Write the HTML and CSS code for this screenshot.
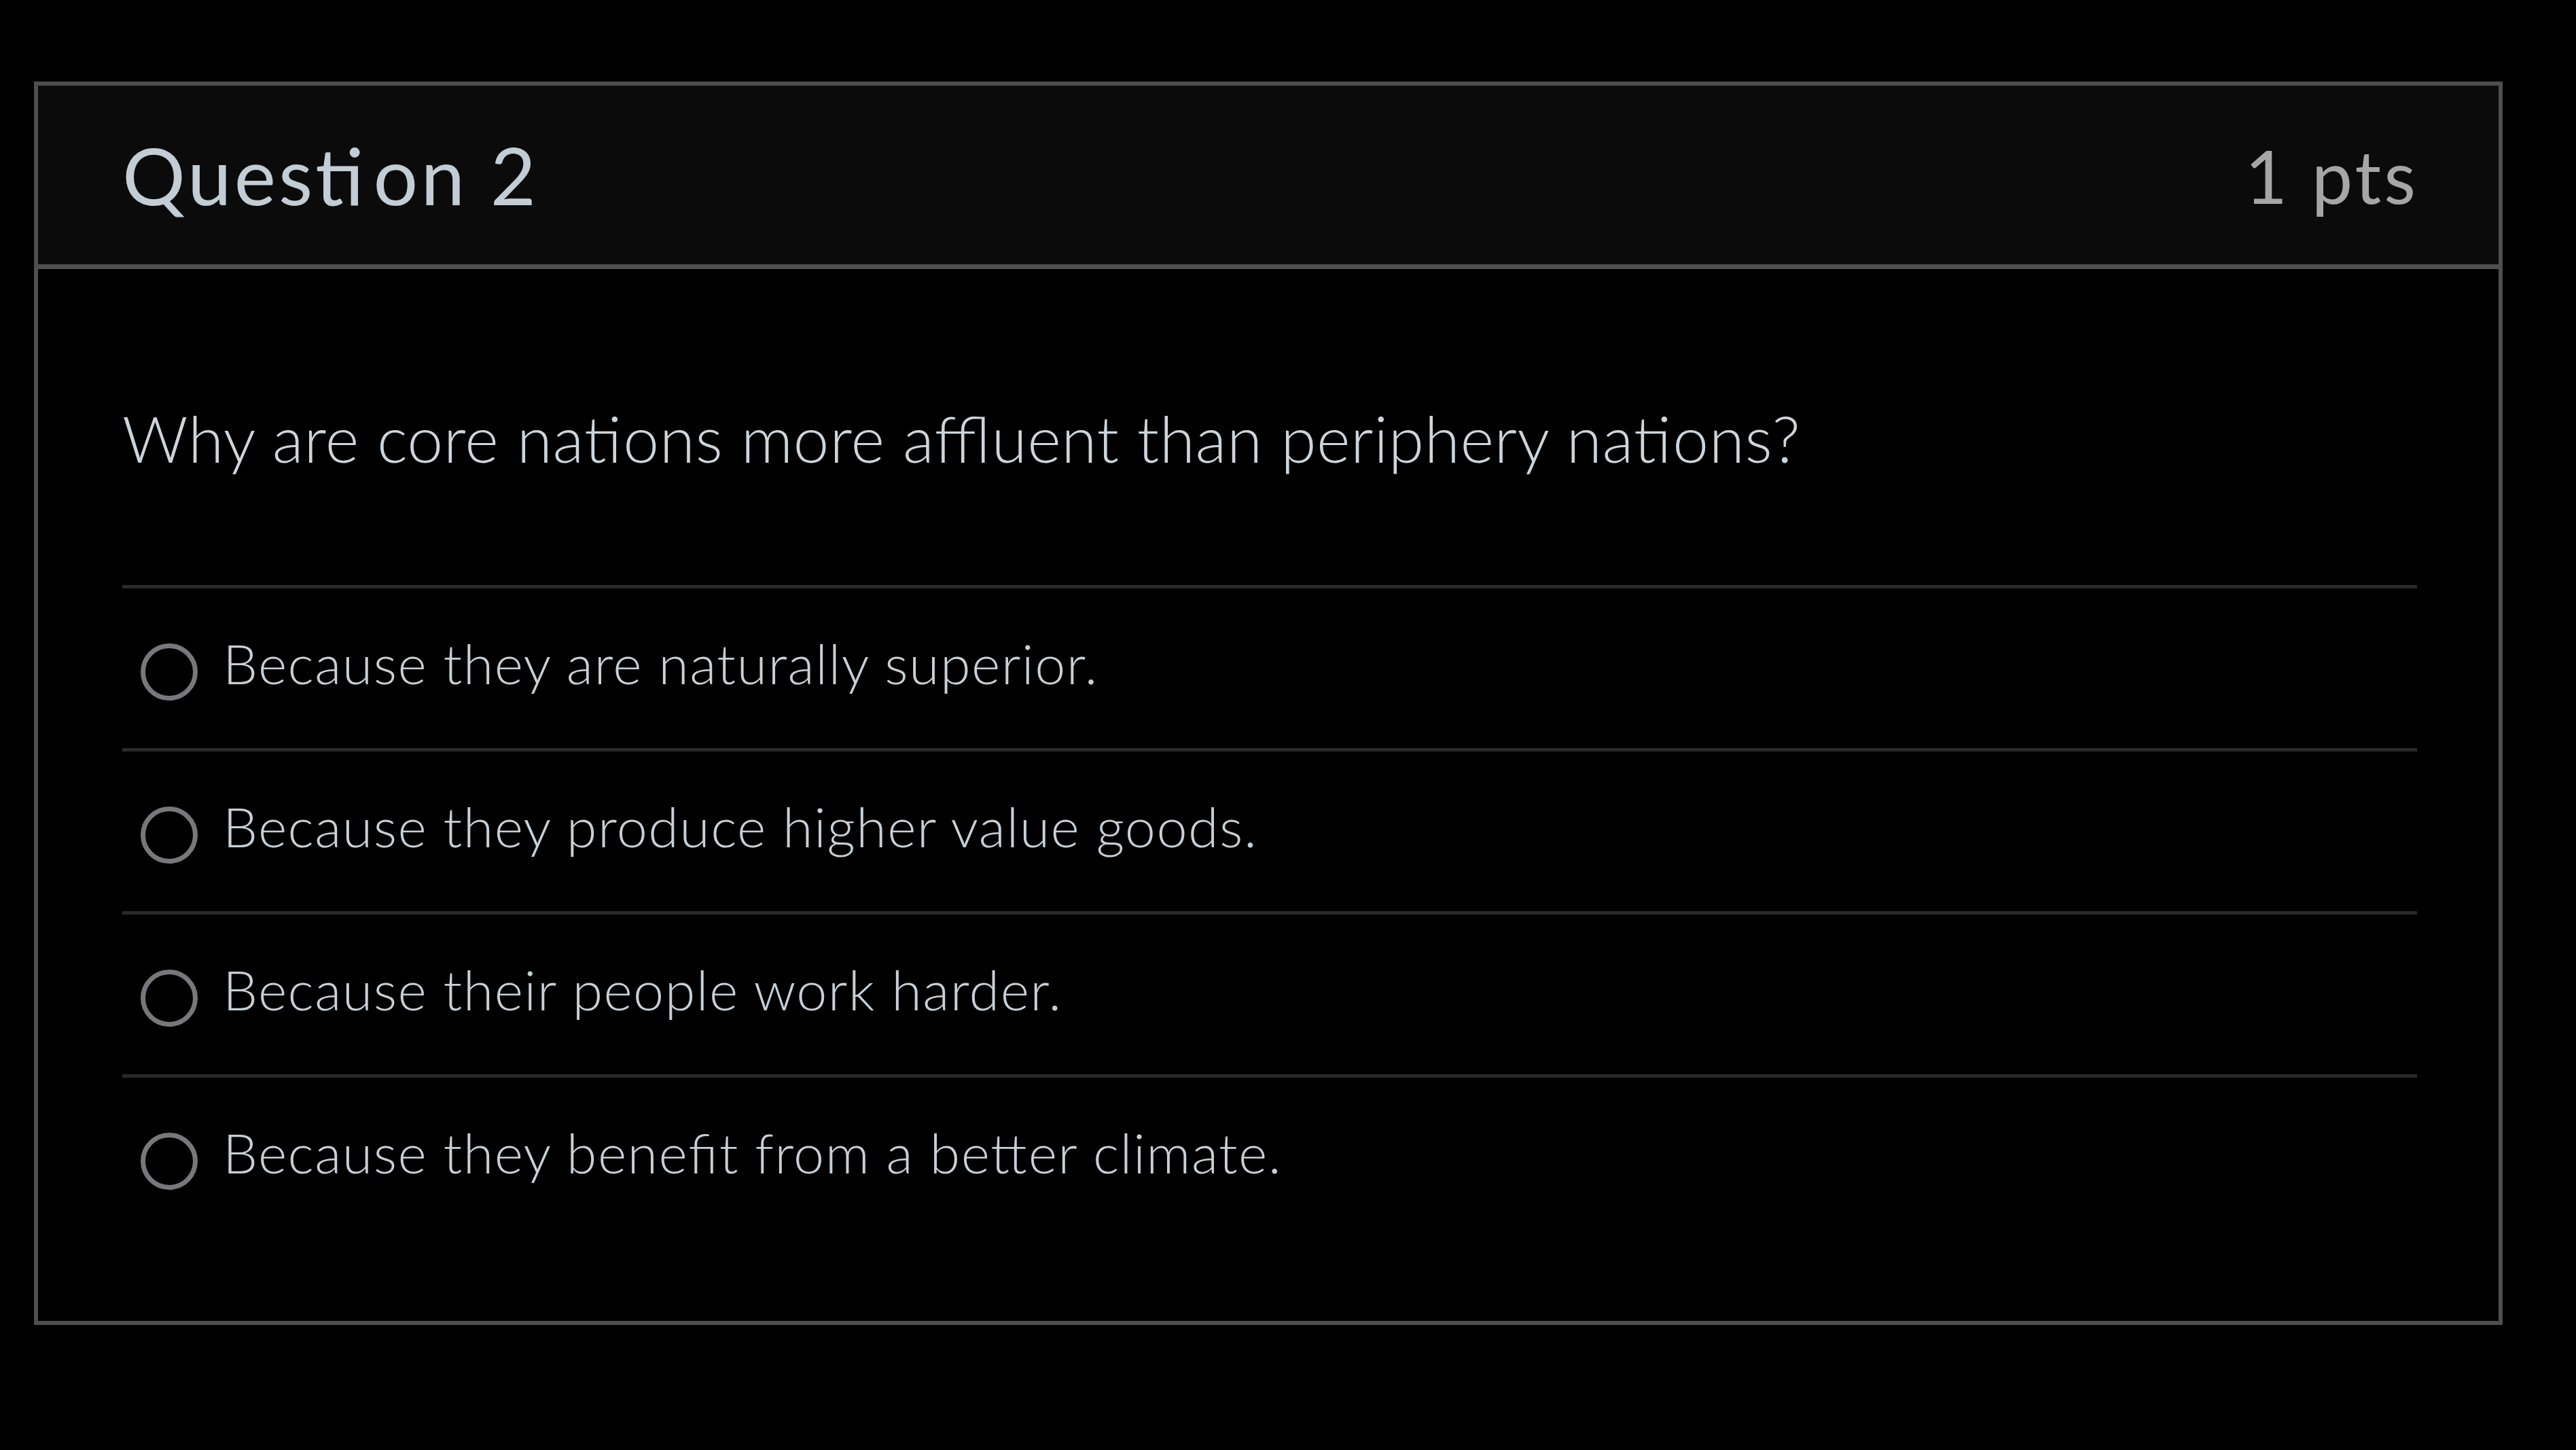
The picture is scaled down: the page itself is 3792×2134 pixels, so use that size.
FILE: index.html
```html
<!DOCTYPE html>
<html lang="en">
<head>
<meta charset="utf-8">
<title>Question 2</title>
<link rel="stylesheet" href="styles.css">
</head>
<body>
<div class="page">
  <section class="card">
    <header class="card-header">
      <h2 class="title">Ques<span class="lig">ti</span>on 2</h2>
      <span class="points">1 pts</span>
    </header>
    <div class="card-body">
      <p class="prompt">Why are core na<span class="lig">ti</span>ons more a<span class="lig">ffl</span>uent than periphery na<span class="lig">ti</span>ons?</p>
      <ul class="answers">
        <li class="answer"><span class="radio"></span><span class="answer-text">Because they are naturally superior.</span></li>
        <li class="answer"><span class="radio"></span><span class="answer-text">Because they produce higher value goods.</span></li>
        <li class="answer"><span class="radio"></span><span class="answer-text">Because their people work harder.</span></li>
        <li class="answer"><span class="radio"></span><span class="answer-text">Because they bene<span class="lig">fi</span>t from a be<span class="lig">tt</span>er climate.</span></li>
      </ul>
    </div>
  </section>
</div>
</body>
</html>
```
FILE: styles.css
```css
html, body {
  margin: 0;
  padding: 0;
  background: #000;
}
body {
  font-family: Lato, "Noto Sans", sans-serif;
  color: #c8d0d6;
  width: 3792px;
  height: 2134px;
  overflow: hidden;
}
.page {
  padding: 120px 108px 0 50px;
}
.card {
  border: 6px solid #4f4f4f;
  box-sizing: border-box;
  height: 1830px;
}
.card-header {
  background: #0b0b0b;
  border-bottom: 7px solid #4f4f4f;
  height: 263px;
  display: flex;
  align-items: center;
  justify-content: space-between;
  padding: 0 118px 0 124px;
}
.title {
  margin: 0;
  font-size: 116px;
  font-weight: 400;
  color: #c2cdd5;
  letter-spacing: 4px;
}
.lig {
  letter-spacing: 0;
  margin-right: 2px;
}
.title .lig {
  margin-right: 14px;
}
.points {
  font-size: 108px;
  color: #a6a6a6;
  letter-spacing: 4px;
}
.card-body {
  padding: 0 120px 0 124px;
}
.prompt {
  margin: 0;
  padding-top: 198px;
  height: 267px;
  font-size: 95px;
  font-weight: 300;
  line-height: 100px;
  color: #cdd5db;
  letter-spacing: 0.5px;
}
.answers {
  list-style: none;
  margin: 0;
  padding: 0;
}
.answer {
  display: flex;
  align-items: center;
  height: 235px;
  border-top: 5px solid #2a2a2a;
}
.radio {
  width: 70px;
  height: 70px;
  border: 7px solid #78787c;
  border-radius: 50%;
  margin: 10px 37px 0 27px;
  flex: none;
}
.answer-text {
  font-size: 81px;
  font-weight: 300;
  color: #c8d0d6;
  margin-top: -16px;
  letter-spacing: 1.4px;
}
```
